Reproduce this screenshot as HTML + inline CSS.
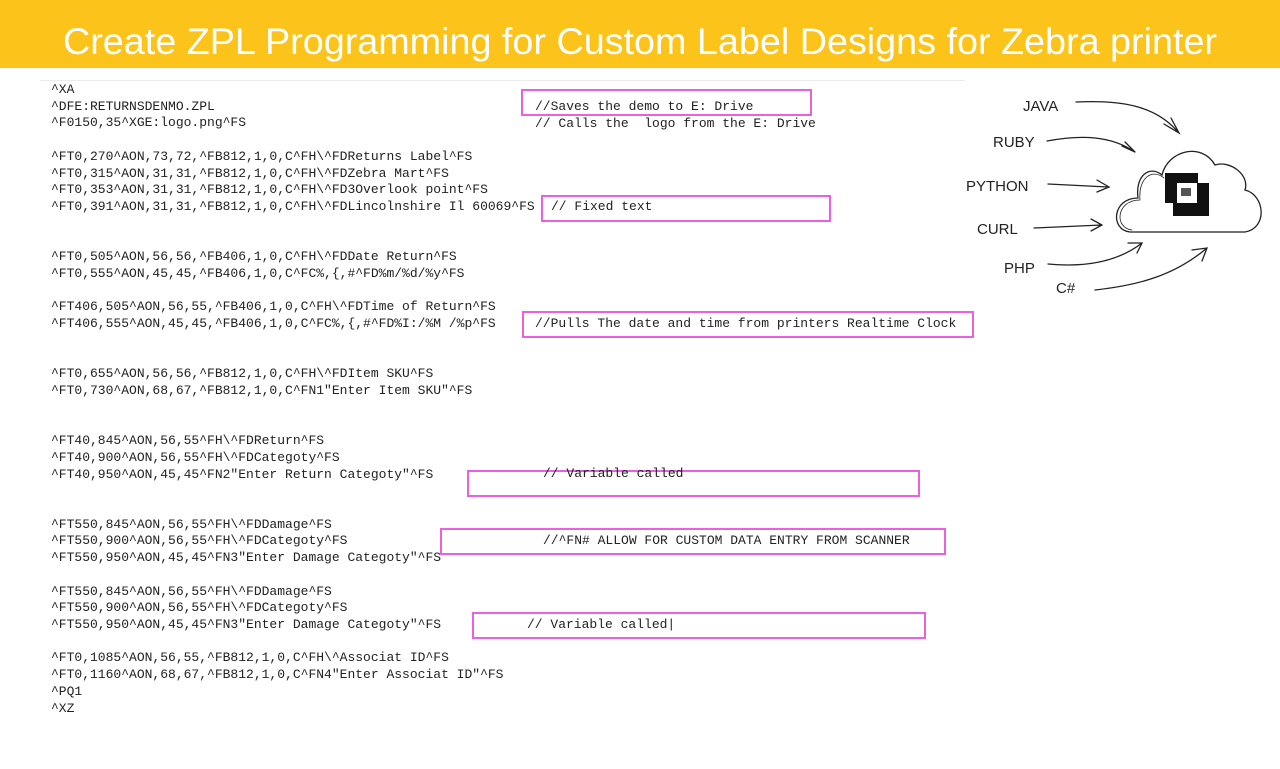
<!DOCTYPE html>
<html><head><meta charset="utf-8"><style>
html,body{margin:0;padding:0;background:#fff;width:1280px;height:769px;overflow:hidden;position:relative;font-family:"Liberation Sans",sans-serif}
.hdr{position:absolute;left:0;top:0;width:1280px;height:68px;background:#fcc41a}
.rule{position:absolute;left:40px;top:80px;width:925px;height:1px;background:#ececec}
pre{position:absolute;left:51px;top:82px;margin:0;font-family:"Liberation Mono",monospace;font-size:13px;line-height:16.72px;color:#222}
.box{position:absolute;border:2px solid #ea5fe3;box-sizing:border-box}
.c{position:absolute;font-family:"Liberation Mono",monospace;font-size:13px;color:#222;line-height:16px;white-space:pre}
</style></head><body>
<div class="hdr"><svg width="1280" height="68"><text x="63" y="54" textLength="1154" lengthAdjust="spacingAndGlyphs" font-family="Liberation Sans, sans-serif" font-size="37" fill="#fff">Create ZPL Programming for Custom Label Designs for Zebra printer</text></svg></div>
<div class="rule"></div>
<pre>^XA
^DFE:RETURNSDENMO.ZPL
^F0150,35^XGE:logo.png^FS

^FT0,270^AON,73,72,^FB812,1,0,C^FH\^FDReturns Label^FS
^FT0,315^AON,31,31,^FB812,1,0,C^FH\^FDZebra Mart^FS
^FT0,353^AON,31,31,^FB812,1,0,C^FH\^FD3Overlook point^FS
^FT0,391^AON,31,31,^FB812,1,0,C^FH\^FDLincolnshire Il 60069^FS


^FT0,505^AON,56,56,^FB406,1,0,C^FH\^FDDate Return^FS
^FT0,555^AON,45,45,^FB406,1,0,C^FC%,{,#^FD%m/%d/%y^FS

^FT406,505^AON,56,55,^FB406,1,0,C^FH\^FDTime of Return^FS
^FT406,555^AON,45,45,^FB406,1,0,C^FC%,{,#^FD%I:/%M /%p^FS


^FT0,655^AON,56,56,^FB812,1,0,C^FH\^FDItem SKU^FS
^FT0,730^AON,68,67,^FB812,1,0,C^FN1"Enter Item SKU"^FS


^FT40,845^AON,56,55^FH\^FDReturn^FS
^FT40,900^AON,56,55^FH\^FDCategoty^FS
^FT40,950^AON,45,45^FN2"Enter Return Categoty"^FS


^FT550,845^AON,56,55^FH\^FDDamage^FS
^FT550,900^AON,56,55^FH\^FDCategoty^FS
^FT550,950^AON,45,45^FN3"Enter Damage Categoty"^FS

^FT550,845^AON,56,55^FH\^FDDamage^FS
^FT550,900^AON,56,55^FH\^FDCategoty^FS
^FT550,950^AON,45,45^FN3"Enter Damage Categoty"^FS

^FT0,1085^AON,56,55,^FB812,1,0,C^FH\^Associat ID^FS
^FT0,1160^AON,68,67,^FB812,1,0,C^FN4"Enter Associat ID"^FS
^PQ1
^XZ</pre>
<div class="box" style="left:521px;top:89px;width:291px;height:27px"></div>
<div class="c" style="left:535px;top:99px">//Saves the demo to E: Drive</div>
<div class="c" style="left:535px;top:116px">// Calls the  logo from the E: Drive</div>
<div class="box" style="left:541px;top:195px;width:290px;height:27px"></div>
<div class="c" style="left:551px;top:199px">// Fixed text</div>
<div class="box" style="left:522px;top:311px;width:452px;height:27px"></div>
<div class="c" style="left:535px;top:316px">//Pulls The date and time from printers Realtime Clock</div>
<div class="box" style="left:467px;top:470px;width:453px;height:27px"></div>
<div class="c" style="left:543px;top:466px">// Variable called</div>
<div class="box" style="left:440px;top:528px;width:506px;height:27px"></div>
<div class="c" style="left:543px;top:533px">//^FN# ALLOW FOR CUSTOM DATA ENTRY FROM SCANNER</div>
<div class="box" style="left:472px;top:612px;width:454px;height:27px"></div>
<div class="c" style="left:527px;top:617px">// Variable called|</div>
<svg style="position:absolute;left:950px;top:80px" width="330" height="220" fill="none" stroke="#222" stroke-width="1.3" stroke-linecap="round">
<g font-family="Liberation Sans, sans-serif" font-size="15" fill="#222" stroke="none">
<text x="73" y="31">JAVA</text><text x="43" y="67">RUBY</text><text x="16" y="111">PYTHON</text>
<text x="27" y="154">CURL</text><text x="54" y="193">PHP</text><text x="106" y="213">C#</text></g>
<path d="M126 22 C170 20 205 25 228 52 M214 44 l15 9 l-8 -15"/>
<path d="M97 61 C130 55 160 55 185 72 M172 66 l13 6 l-10 -10"/>
<path d="M98 104 L158 107 M147 100 l12 7 l-12 5"/>
<path d="M84 148 L152 145 M141 139 l11 6 l-11 6"/>
<path d="M98 184 C140 188 170 180 192 163 M178 163 l14 0 l-5 10"/>
<path d="M145 210 C190 205 225 195 257 168 M242 170 l15 -2 l-5 13"/>
<path d="M180 152 C160 150 162 118 188 118 C185 95 200 85 212 95 C218 70 252 62 265 85 C280 80 300 95 295 110 C315 115 318 148 295 152 Z"/>
<path d="M182 150 C164 148 166 120 190 120 C188 98 202 88 214 98" stroke-width="0.8"/>
<rect x="215" y="93" width="33" height="30" fill="#111" stroke="none"/>
<rect x="223" y="103" width="36" height="33" fill="#111" stroke="none"/>
<rect x="227" y="103" width="20" height="20" fill="#fff" stroke="none"/>
<rect x="231" y="108" width="10" height="8" fill="#555" stroke="none"/>
</svg>
</body></html>
